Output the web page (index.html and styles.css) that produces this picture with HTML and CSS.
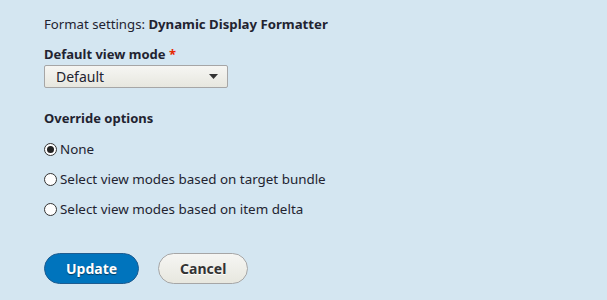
FILE: index.html
```html
<!DOCTYPE html>
<html>
<head>
<meta charset="utf-8">
<link rel="stylesheet" href="styles.css">
</head>
<body>
<form class="panel">
  <div class="summary">Format settings: <strong>Dynamic Display Formatter</strong></div>

  <div class="field">
    <label class="label">Default view mode <span class="req">*</span></label>
    <div class="select">
      <span class="select-value">Default</span>
      <svg class="select-arrow" width="9" height="5" viewBox="0 0 9 5"><path d="M0 0h9L4.5 5z" fill="#333"/></svg>
    </div>
  </div>

  <div class="field options">
    <div class="label">Override options</div>
    <div class="radio-list">
      <label class="radio"><span class="dot checked"></span>None</label>
      <label class="radio"><span class="dot"></span>Select view modes based on target bundle</label>
      <label class="radio"><span class="dot"></span>Select view modes based on item delta</label>
    </div>
  </div>

  <div class="actions">
    <span class="btn primary">Update</span>
    <span class="btn">Cancel</span>
  </div>
</form>
</body>
</html>
```

FILE: styles.css
```css
html, body {
  margin: 0;
  padding: 0;
  background: #d4e6f1;
}
body {
  font-family: "Noto Sans", "DejaVu Sans", sans-serif;
  font-size: 13px;
  color: #222330;
}
.panel {
  padding: 15px 44px;
  display: flex;
  flex-direction: column;
}
.summary {
  line-height: 18px;
  font-size: 13.2px;
}
.summary strong {
  font-weight: 700;
}
.field {
  margin-top: 12px;
  display: flex;
  flex-direction: column;
}
.label {
  font-weight: 700;
  line-height: 18px;
}
.req {
  color: #e62600;
}
.select {
  margin-top: 2px;
  box-sizing: border-box;
  width: 184px;
  height: 23px;
  border: 1px solid #a6a6a6;
  border-radius: 2px;
  background: linear-gradient(#f6f6f3, #e7e7df);
  display: flex;
  align-items: center;
  justify-content: space-between;
  padding: 0 9px 0 11px;
}
.select-value {
  font-size: 14px;
  line-height: 18px;
}
.options {
  margin-top: 21px;
}
.radio-list {
  margin-top: 13px;
  display: flex;
  flex-direction: column;
  gap: 12px;
}
.radio {
  display: flex;
  align-items: center;
  line-height: 18px;
  font-size: 13.4px;
}
.dot {
  box-sizing: border-box;
  width: 13px;
  height: 13px;
  border: 1px solid #333;
  border-radius: 50%;
  background: #fff;
  margin-right: 3px;
  position: relative;
}
.dot.checked::after {
  content: "";
  position: absolute;
  left: 2px;
  top: 2px;
  width: 7px;
  height: 7px;
  border-radius: 50%;
  background: #222;
}
.actions {
  margin-top: 35px;
  display: flex;
  gap: 19px;
}
.btn {
  box-sizing: border-box;
  height: 31px;
  padding: 0 21px;
  border-radius: 20px;
  border: 1px solid #a6a6a6;
  background: linear-gradient(#f6f6f3, #e7e7df);
  color: #333;
  font-weight: 700;
  font-size: 14px;
  display: flex;
  align-items: center;
  text-shadow: 0 1px #fff;
}
.btn.primary {
  background: #0074bd;
  border-color: #1e5c90;
  color: #fff;
  text-shadow: 0 1px 1px rgba(0,0,0,0.5);
}
```
